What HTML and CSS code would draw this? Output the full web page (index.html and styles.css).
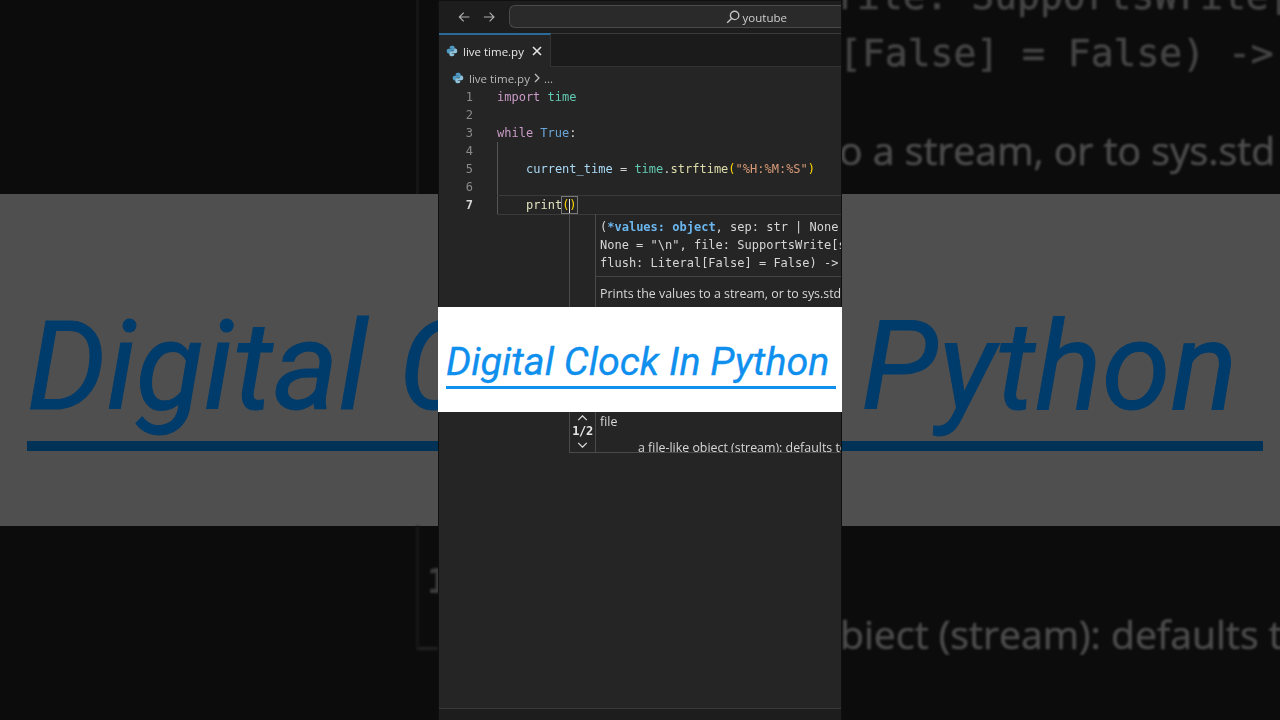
FILE: index.html
```html
<!DOCTYPE html>
<html lang="en">
  <head>
    <meta charset="UTF-8" />
    <title>Digital Clock In Python</title>
    <link rel="stylesheet" href="styles.css">
  </head>
  <body>
    <!-- blurred, zoomed copy of the video behind the phone frame -->
    <div class="backdrop">
      <div class="back-top">
        <div class="back-rule"></div>
        <div class="back-code">
          <div class="back-line back-line-1">file: SupportsWrite[s</div>
          <div class="back-line back-line-2">[False] = False) -&gt;</div>
          <div class="back-text">o a stream, or to sys.std</div>
        </div>
      </div>
      <div class="back-band">
        <div class="back-title">Digital Clock In Python</div>
      </div>
      <div class="back-bottom">
        <div class="back-pager">1</div>
        <div class="back-text back-text-low">biect (stream): defaults t</div>
      </div>
    </div>

    <div class="phone">
      <div class="titlebar soft">
        <svg class="nav-arrow" viewBox="0 0 14 12"><path d="M13 6H1.5M6.5 1 1.5 6l5 5" /></svg>
        <svg class="nav-arrow" viewBox="0 0 14 12"><path d="M1 6h11.5M7.5 1l5 5-5 5" /></svg>
        <div class="searchbox">
          <svg class="search-icon" viewBox="0 0 14 14"><circle cx="8.6" cy="5.4" r="4.2" /><path d="M5.6 8.4 1.2 12.8" /></svg>
          <span>youtube</span>
        </div>
      </div>

      <div class="tabbar">
        <div class="tab">
          <svg class="py-icon soft" viewBox="0 0 16 16">
            <path class="py-blue" d="M8 1C5.500 1 5 2 5 3v1.500h3.200V5H3.200C2 5 1 6 1 8s1 3.200 2.200 3.200H5V9.600C5 8.500 6 7.600 7 7.600h3c.9 0 1.500-.7 1.500-1.500V3c0-1.100-1.400-2-3.500-2z" />
            <path class="py-light" d="M8 15c2.500 0 3-1 3-2v-1.500H7.800V11h5c1.200 0 2.200-1 2.200-3s-1-3.200-2.200-3.200H11v1.600c0 1.100-1 2-2 2H6c-.9 0-1.500.7-1.500 1.500V13c0 1.100 1.400 2 3.500 2z" />
          </svg>
          <span class="tab-name soft">live time.py</span>
          <svg class="tab-close soft" viewBox="0 0 10 10"><path d="M1 1l8 8M9 1 1 9" /></svg>
        </div>
      </div>

      <div class="crumbs soft">
        <svg class="py-icon" viewBox="0 0 16 16">
          <path class="py-blue" d="M8 1C5.500 1 5 2 5 3v1.500h3.200V5H3.200C2 5 1 6 1 8s1 3.200 2.200 3.200H5V9.600C5 8.500 6 7.600 7 7.600h3c.9 0 1.500-.7 1.500-1.500V3c0-1.100-1.400-2-3.500-2z" />
          <path class="py-light" d="M8 15c2.500 0 3-1 3-2v-1.500H7.800V11h5c1.200 0 2.200-1 2.200-3s-1-3.200-2.200-3.200H11v1.600c0 1.100-1 2-2 2H6c-.9 0-1.500.7-1.500 1.500V13c0 1.100 1.400 2 3.500 2z" />
        </svg>
        <span>live time.py</span>
        <svg class="crumb-sep" viewBox="0 0 6 10"><path d="M1 1l4 4-4 4" /></svg>
        <span>...</span>
      </div>

      <div class="code soft">
        <div class="row"><span class="num">1</span><span class="src"><span class="kw">import</span> <span class="mod">time</span></span></div>
        <div class="row"><span class="num">2</span><span class="src"></span></div>
        <div class="row"><span class="num">3</span><span class="src"><span class="kw">while</span> <span class="const">True</span>:</span></div>
        <div class="row"><span class="num">4</span><span class="src guide"></span></div>
        <div class="row"><span class="num">5</span><span class="src guide in"><span class="var">current_time</span> = <span class="mod">time</span>.<span class="fn">strftime</span><span class="br">(</span><span class="str">"%H:%M:%S"</span><span class="br">)</span></span></div>
        <div class="row"><span class="num">6</span><span class="src guide"></span></div>
        <div class="row row-active"><span class="num">7</span><span class="src guide in"><span class="fn-plain">print</span><span class="match"><span class="br">(</span><span class="caret"></span><span class="br">)</span></span></span></div>
      </div>

      <div class="hint soft">
        <div class="pager">
          <svg class="pager-arrow" viewBox="0 0 12 7"><path d="M1 6l5-5 5 5" /></svg>
          <span class="pager-count">1/2</span>
          <svg class="pager-arrow" viewBox="0 0 12 7"><path d="M1 1l5 5 5-5" /></svg>
        </div>
        <div class="hint-body">
          <div class="sig">
            <div>(<span class="sig-on">*values: object</span>, sep: str | None =</div>
            <div>None = "\n", file: SupportsWrite[str]</div>
            <div>flush: Literal[False] = False) -&gt; None</div>
          </div>
          <div class="docs">
            <div>Prints the values to a stream, or to sys.stdout by default.</div>
            <div class="doc-file">file</div>
            <div class="doc-desc">a file-like object (stream): defaults to the current</div>
          </div>
        </div>
      </div>

      <div class="statusbar"></div>

      <div class="banner">
        <div class="banner-title">Digital Clock In Python</div>
      </div>
    </div>
  </body>
</html>
```

FILE: styles.css
```css
* {
  box-sizing: border-box;
}

html,
body {
  height: 100%;
}

body {
  margin: 0;
  background: #0c0c0c;
  overflow: hidden;
  position: relative;
  font-family: "Open Sans", sans-serif;
}

/* the video is a little soft, text should not look too crisp */
.soft {
  filter: blur(0.35px);
}

/* backdrop */
.backdrop {
  position: absolute;
  inset: 0;
  display: flex;
  flex-direction: column;
  overflow: hidden;
}

.back-top {
  height: 194px;
  position: relative;
}

.back-rule {
  position: absolute;
  left: 416px;
  top: 0;
  bottom: 0;
  border-left: 3px solid #161616;
}

.back-code {
  margin-left: 842px;
  white-space: nowrap;
  overflow: hidden;
  height: 194px;
}

.back-line {
  font-family: "DejaVu Sans Mono", monospace;
  font-size: 38px;
  line-height: 57px;
  color: #454545;
  -webkit-text-stroke: 0.6px #454545;
  filter: blur(1px);
}

.back-line-1 {
  margin-top: -32px;
  margin-left: -8px;
}

.back-line-2 {
  margin-left: -3px;
}

.back-text {
  font-family: "Open Sans", sans-serif;
  font-size: 39.200px;
  line-height: 52px;
  color: #4c4c4c;
  -webkit-text-stroke: 0.6px #4c4c4c;
  white-space: nowrap;
  margin-top: 42px;
  margin-left: -3px;
  filter: blur(1px);
}

.back-band {
  height: 332px;
  background: #4f4f4f;
  padding: 102px 0 0 27px;
}

.back-title {
  width: 1236px;
  height: 155px;
  font-family: Roboto, sans-serif;
  font-style: italic;
  font-size: 124.700px;
  line-height: 140px;
  color: #003c6b;
  -webkit-text-stroke: 1px #003c6b;
  white-space: nowrap;
  border-bottom: 10px solid #003258;
  filter: blur(0.5px);
}

.back-bottom {
  flex: 1;
  position: relative;
}

.back-pager {
  width: 22px;
  height: 124px;
  margin-left: 416px;
  padding: 35px 0 0 8px;
  border-left: 3px solid #161616;
  border-bottom: 3px solid #222;
  font-family: "DejaVu Sans Mono", monospace;
  font-size: 34px;
  font-weight: 700;
  color: #3d3d3d;
  filter: blur(0.8px);
}

.back-text-low {
  position: absolute;
  left: 840px;
  top: 82px;
  margin: 0;
}

/* center video */
.phone {
  position: relative;
  width: 404px;
  height: 720px;
  margin-left: 438px;
  background: #252525;
  overflow: hidden;
  display: flex;
  flex-direction: column;
  color: #cccccc;
}

.phone::after {
  content: "";
  position: absolute;
  inset: 0;
  box-shadow: inset 1px 0 #101010, inset -1px 0 #101010, inset 0 1px #101010;
}

.titlebar {
  height: 33px;
  padding: 5px 0 0 20px;
  background: #1d1d1d;
  display: flex;
  align-items: flex-start;
}

.nav-arrow {
  width: 13px;
  height: 12px;
  margin: 6px 13px 0 0;
  fill: none;
  stroke: #b0b0b0;
  stroke-width: 1.3;
}

.searchbox {
  width: 340px;
  height: 23px;
  padding: 1px 0 0 216px;
  background: #2a2a2a;
  border: 1px solid #4a4a4a;
  border-right: 0;
  border-radius: 6px 0 0 6px;
  display: flex;
  align-items: center;
  gap: 3px;
  font-size: 11.500px;
  color: #cfcfcf;
}

.search-icon {
  width: 14px;
  height: 14px;
  fill: none;
  stroke: #c4c4c4;
  stroke-width: 1.4;
}

.tabbar {
  height: 34px;
  background: #1b1b1b;
  border-top: 1px solid #3b3b3b;
  border-bottom: 1px solid #333;
}

.tab {
  width: 113px;
  height: 34px;
  margin-top: -1px;
  padding-left: 8px;
  background: #252525;
  border-top: 2px solid #2a6a9b;
  border-right: 1px solid #333;
  display: flex;
  align-items: center;
  font-size: 11.500px;
  color: #e6e6e6;
}

.py-icon {
  width: 12px;
  height: 12px;
  flex: none;
}

.py-blue {
  fill: #4d9bc4;
}

.py-light {
  fill: #8fc3dc;
}

.tab-name {
  margin-left: 5px;
}

.tab-close {
  width: 10px;
  height: 10px;
  margin-left: 8px;
  fill: none;
  stroke: #e4e4e4;
  stroke-width: 1.6;
}

.crumbs {
  height: 21px;
  padding: 1px 0 0 14px;
  display: flex;
  align-items: center;
  font-size: 11.500px;
  color: #b9b9b9;
}

.crumbs .py-icon {
  margin-right: 5px;
}

.crumb-sep {
  width: 6px;
  height: 10px;
  margin: 0 4px;
  fill: none;
  stroke: #c4c4c4;
  stroke-width: 1.2;
}

/* editor */
.code {
  font-family: "DejaVu Sans Mono", monospace;
  font-size: 12px;
  line-height: 18px;
  color: #d4d4d4;
}

.row {
  display: flex;
  height: 18px;
  white-space: nowrap;
}

.num {
  width: 35px;
  text-align: right;
  color: #8a8a8a;
}

.src {
  margin-left: 24px;
  flex: 1;
}

.guide {
  border-left: 1px solid #555;
}

.in {
  padding-left: 28px;
}

.row-active .src {
  box-shadow: 0 -1px 0 #3a3a3a, 0 1px 0 #3a3a3a;
}

.row-active .num {
  color: #d6d6d6;
  font-weight: 700;
}

.kw {
  color: #c99ac6;
}

.mod {
  color: #62c9b2;
}

.const {
  color: #6aa5d8;
}

.var {
  color: #a9d8f5;
}

.fn {
  color: #dcdcaa;
}

.fn-plain {
  color: #e0e0c0;
}

.br {
  color: #ffd700;
}

.str {
  color: #d89a78;
}

.match {
  display: inline-block;
  height: 16px;
  line-height: 16px;
  outline: 1px solid #777;
}

.caret {
  display: inline-block;
  width: 1px;
  height: 14px;
  margin: 0 -1px 0 0;
  background: #e8e8e8;
  vertical-align: middle;
}

/* parameter hint widget */
.hint {
  width: 273px;
  height: 239px;
  margin-left: 131px;
  border-left: 1px solid #4a4a4a;
  border-bottom: 1px solid #4a4a4a;
  display: flex;
  white-space: nowrap;
}

.pager {
  width: 26px;
  flex: none;
  padding-top: 201px;
  border-right: 1px solid #4a4a4a;
  display: flex;
  flex-direction: column;
  align-items: center;
  gap: 5px;
}

.pager-count {
  font-family: "DejaVu Sans Mono", monospace;
  font-size: 12px;
  font-weight: 700;
  line-height: 11px;
  color: #e4e4e4;
  letter-spacing: -0.4px;
}

.pager-arrow {
  width: 11px;
  height: 6px;
  flex: none;
  fill: none;
  stroke: #dcdcdc;
  stroke-width: 1.500;
}

.hint-body {
  flex: 1;
  overflow: hidden;
}

.sig {
  height: 63px;
  padding: 4px 0 0 4px;
  border-bottom: 1px solid #444;
  font-family: "DejaVu Sans Mono", monospace;
  font-size: 12px;
  line-height: 18px;
  color: #d6d6d6;
}

.sig-on {
  color: #6cb6ee;
  font-weight: 700;
}

.docs {
  padding: 8px 0 0 4px;
  font-size: 12.400px;
  line-height: 18px;
  color: #d8d8d8;
}

.doc-file {
  margin-top: 110px;
}

.doc-desc {
  margin: 8px 0 0 38px;
}

.statusbar {
  position: absolute;
  left: 0;
  right: 0;
  bottom: 0;
  height: 12px;
  background: #1d1d1d;
  border-top: 1px solid #3a3a3a;
}

/* title banner over the video */
.banner {
  position: absolute;
  left: 0;
  right: 0;
  top: 307px;
  height: 105px;
  padding: 33px 0 0 8px;
  background: #fff;
  z-index: 1;
}

.banner-title {
  width: 390px;
  height: 49px;
  font-family: Roboto, sans-serif;
  font-style: italic;
  font-size: 39.500px;
  line-height: 44px;
  color: #0f8fee;
  -webkit-text-stroke: 0.3px #0f8fee;
  white-space: nowrap;
  border-bottom: 3px solid #0f8fee;
}
```
